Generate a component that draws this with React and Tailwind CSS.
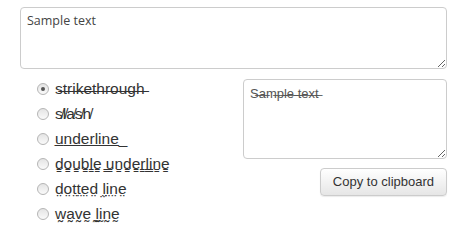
import React, { useState } from "react";

const styles = [
  { id: "strike", label: "strikethrough", mark: "\u0336" },
  { id: "slash", label: "slash", mark: "\u0338" },
  { id: "underline", label: "underline ", mark: "\u0332" },
  { id: "double", label: "double underline", mark: "\u0333" },
  { id: "dotted", label: "dotted line", mark: "\u0324" },
  { id: "wave", label: "wave line", mark: "\u0330" },
];

const decorate = (text, mark) =>
  text
    .split("")
    .map((c) => c + mark)
    .join("");

function Radio({ checked }) {
  return (
    <span className="relative inline-block w-[12px] h-[12px] rounded-full border border-[#b5b5b5] bg-gradient-to-b from-[#e4e4e4] to-[#fafafa] shrink-0">
      {checked && (
        <span className="absolute left-[3px] top-[3px] w-[4px] h-[4px] rounded-full bg-[#555]" />
      )}
    </span>
  );
}

export default function App() {
  const [text] = useState("Sample text");
  const [selected, setSelected] = useState("strike");
  const mark = styles.find((s) => s.id === selected).mark;

  return (
    <div className="w-[474px] h-[232px] bg-white px-[20px] pt-[7px] overflow-hidden">
      <textarea
        className="block w-[427px] h-[62px] border border-[#ccc] rounded-[4px] px-[6px] py-[4px] text-[12.5px] text-[#444] resize-y outline-none"
        style={{ fontFamily: "'Open Sans', sans-serif" }}
        defaultValue={text}
      />
      <div className="flex items-start">
        <div className="mt-[7px] pl-[17px] w-[223px]">
          {styles.map((s) => (
            <label
              key={s.id}
              className="flex items-center h-[25px] gap-[6px] cursor-pointer"
              onClick={() => setSelected(s.id)}
            >
              <Radio checked={selected === s.id} />
              <span
                className="text-[15.5px] text-[#333] whitespace-pre"
                style={{ fontFamily: "'Open Sans', sans-serif" }}
              >
                {decorate(s.label, s.mark)}
              </span>
            </label>
          ))}
        </div>
        <div className="mt-[10px] w-[204px] flex flex-col items-end">
          <textarea
            className="block w-[204px] h-[80px] border border-[#ccc] rounded-[4px] px-[6px] py-[4px] text-[13px] text-[#555] resize-y outline-none"
            style={{ fontFamily: "'Liberation Sans', Arial, sans-serif" }}
            readOnly
            value={decorate(text, mark)}
          />
          <button
            className="mt-[9px] h-[28px] px-[12px] border border-[#ccc] rounded-[4px] bg-gradient-to-b from-white to-[#e6e6e6] text-[13px] text-[#333] shadow-[0_1px_1px_rgba(0,0,0,0.08)]"
            style={{ fontFamily: "'Liberation Sans', Arial, sans-serif" }}
          >
            Copy to clipboard
          </button>
        </div>
      </div>
    </div>
  );
}
